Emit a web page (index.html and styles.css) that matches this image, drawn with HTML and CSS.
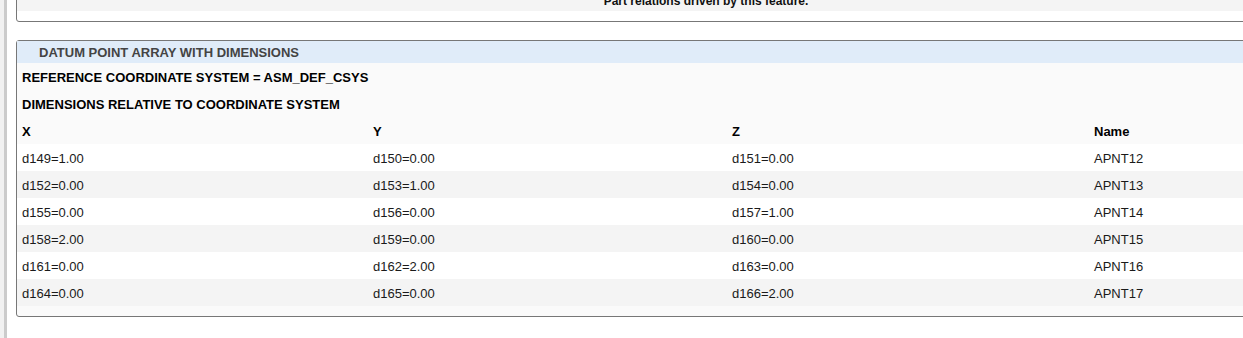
FILE: index.html
```html
<!DOCTYPE html>
<html>
<head>
<meta charset="utf-8">
<link rel="stylesheet" href="styles.css">
</head>
<body>
<div class="page">
  <div class="gutter"></div>
  <div class="main">
    <div class="panel panel-top">
      <div class="top-row">Part relations driven by this feature.</div>
      <div class="top-spacer"></div>
    </div>
    <div class="panel panel-array">
      <div class="panel-head">DATUM POINT ARRAY WITH DIMENSIONS</div>
      <div class="panel-body">
        <div class="line bold">REFERENCE COORDINATE SYSTEM = ASM_DEF_CSYS</div>
        <div class="line bold">DIMENSIONS RELATIVE TO COORDINATE SYSTEM</div>
        <div class="grid">
          <div class="row head"><span>X</span><span>Y</span><span>Z</span><span>Name</span></div>
          <div class="row odd"><span>d149=1.00</span><span>d150=0.00</span><span>d151=0.00</span><span>APNT12</span></div>
          <div class="row even"><span>d152=0.00</span><span>d153=1.00</span><span>d154=0.00</span><span>APNT13</span></div>
          <div class="row odd"><span>d155=0.00</span><span>d156=0.00</span><span>d157=1.00</span><span>APNT14</span></div>
          <div class="row even"><span>d158=2.00</span><span>d159=0.00</span><span>d160=0.00</span><span>APNT15</span></div>
          <div class="row odd"><span>d161=0.00</span><span>d162=2.00</span><span>d163=0.00</span><span>APNT16</span></div>
          <div class="row even"><span>d164=0.00</span><span>d165=0.00</span><span>d166=2.00</span><span>APNT17</span></div>
        </div>
      </div>
    </div>
  </div>
</div>
</body>
</html>
```

FILE: styles.css
```css
html, body {
  margin: 0;
  padding: 0;
  overflow: hidden;
  background: #ffffff;
}
body {
  font-family: "Liberation Sans", Arial, sans-serif;
  font-size: 13px;
  color: #1a1a1a;
}
.page {
  display: flex;
  height: 338px;
  overflow: hidden;
}
.gutter {
  flex: 0 0 4px;
  background: #f1f1f1;
  border-right: 3px solid #cbcbcb;
}
.main {
  flex: 0 0 auto;
  padding-left: 9px;
  display: flex;
  flex-direction: column;
}
.panel {
  width: 1380px;
  border: 1px solid #777777;
  border-radius: 3px;
  box-sizing: border-box;
}
.panel-top {
  margin-top: -17px;
  background: #ffffff;
}
.top-row {
  height: 27px;
  box-sizing: border-box;
  padding-top: 8px;
  line-height: 19px;
  background: #f4f4f4;
  text-align: center;
  font-size: 12px;
  font-weight: bold;
  color: #111111;
}
.top-spacer {
  height: 10px;
}
.panel-array {
  margin-top: 18px;
  background: #fafafa;
}
.panel-head {
  height: 22px;
  box-sizing: border-box;
  padding-top: 2px;
  line-height: 20px;
  background: #e0ecf9;
  padding-left: 22px;
  font-weight: bold;
  color: #444444;
}
.panel-body {
  padding-bottom: 10px;
}
.line {
  height: 27px;
  box-sizing: border-box;
  padding-top: 2px;
  line-height: 25px;
  padding-left: 5px;
}
.bold {
  font-weight: bold;
  color: #000000;
}
.grid {
  display: flex;
  flex-direction: column;
}
.row {
  display: grid;
  grid-template-columns: 351px 359px 362px 1fr;
  height: 27px;
  box-sizing: border-box;
  padding-top: 2px;
  line-height: 25px;
}
.row span {
  padding-left: 5px;
  white-space: nowrap;
}
.row.head {
  font-weight: bold;
  color: #000000;
}
.row.odd {
  background: #ffffff;
}
.row.even {
  background: #f4f4f4;
}
```
